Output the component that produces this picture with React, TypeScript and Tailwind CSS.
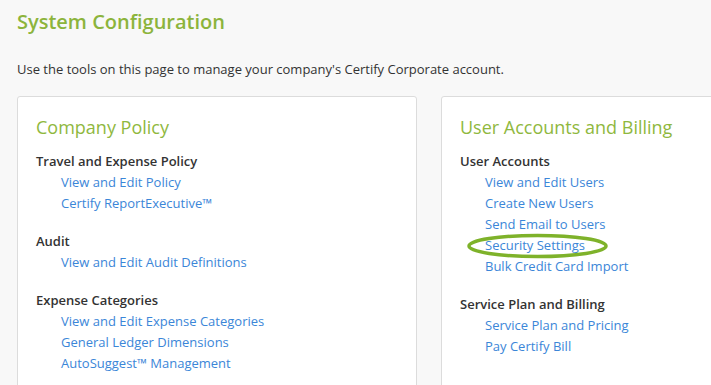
const font = { fontFamily: '"Open Sans", "Liberation Sans", sans-serif' };

type Group = { title: string; links: string[] };

const left: Group[] = [
  { title: "Travel and Expense Policy", links: ["View and Edit Policy", "Certify ReportExecutive™"] },
  { title: "Audit", links: ["View and Edit Audit Definitions"] },
  {
    title: "Expense Categories",
    links: ["View and Edit Expense Categories", "General Ledger Dimensions", "AutoSuggest™ Management"],
  },
];

const right: Group[] = [
  {
    title: "User Accounts",
    links: [
      "View and Edit Users",
      "Create New Users",
      "Send Email to Users",
      "Security Settings",
      "Bulk Credit Card Import",
    ],
  },
  { title: "Service Plan and Billing", links: ["Service Plan and Pricing", "Pay Certify Bill"] },
];

function Panel({ heading, groups }: { heading: string; groups: Group[] }) {
  return (
    <div className="w-[400px] shrink-0 bg-white border border-[#dcdcdc] rounded-[3px] pl-[18px] pt-[17px] pb-10">
      <h2 className="text-[18px] leading-[26px] text-[#8fb83e]">{heading}</h2>
      <div className="mt-[11px] flex flex-col gap-[17px]">
        {groups.map((g) => (
          <div key={g.title}>
            <h3 className="text-[13px] leading-[21px] font-semibold text-[#333333]">{g.title}</h3>
            <ul className="pl-[25px]">
              {g.links.map((l) => (
                <li key={l} className="text-[13px] leading-[21px] text-[#3b86d8]">
                  {l === "Security Settings" ? (
                    <span className="relative">
                      {l}
                      <svg
                        className="absolute -left-[18px] -top-[3px]"
                        width="141"
                        height="26"
                        viewBox="0 0 141 26"
                      >
                        <ellipse cx="70.5" cy="13" rx="68.5" ry="10.5" fill="none" stroke="#7eb22a" strokeWidth="3.5" />
                      </svg>
                    </span>
                  ) : (
                    l
                  )}
                </li>
              ))}
            </ul>
          </div>
        ))}
      </div>
    </div>
  );
}

export default function App() {
  return (
    <div className="h-[385px] w-[711px] overflow-hidden bg-[#f8f8f8]" style={font}>
      <div className="pl-[17px] pt-[7px]">
        <h1 className="text-[20px] leading-[30px] font-semibold text-[#8cb43c]">System Configuration</h1>
        <p className="mt-[23px] text-[13px] leading-[18px] text-[#333333]">
          Use the tools on this page to manage your company's Certify Corporate account.
        </p>
        <div className="mt-[18px] flex gap-[24px]">
          <Panel heading="Company Policy" groups={left} />
          <Panel heading="User Accounts and Billing" groups={right} />
        </div>
      </div>
    </div>
  );
}
